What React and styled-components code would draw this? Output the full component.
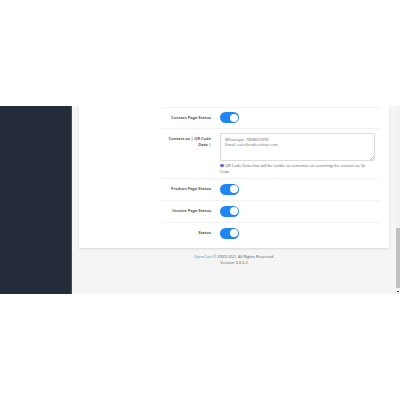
import React from 'react'
import styled, { createGlobalStyle } from 'styled-components'

const Global = createGlobalStyle`
  html, body { margin: 0; padding: 0; background: #fff; }
  body { font-family: "Open Sans", "Noto Sans", sans-serif; }
`

const Shell = styled.div`
  display: flex;
  width: 400px;
  height: 188px;
  margin-top: 106px;
  overflow: hidden;
`

const Sidebar = styled.div`
  width: 72px;
  flex: none;
  background: #242d39;
  border-right: 1px solid #444c57;
  box-sizing: border-box;
`

const Content = styled.div`
  flex: 1;
  background: #f5f5f5;
  padding: 0 7px;
  min-width: 0;
`

const Card = styled.div`
  background: #fff;
  height: 142px;
  padding: 1px 9px 0 82px;
  box-sizing: border-box;
  box-shadow: 0 1px 2px rgba(0, 0, 0, 0.12);
`

const Row = styled.div`
  display: grid;
  grid-template-columns: 50px 1fr;
  column-gap: 9px;
  align-items: ${p => (p.$top ? 'start' : 'center')};
  height: ${p => p.$h}px;
  border-top: 1px solid #f3f3f3;
  box-sizing: border-box;
  padding: ${p => (p.$top ? '4px 0 0' : '0 0 1px')};
`

const Label = styled.div`
  font-size: 4px;
  line-height: 5.5px;
  font-weight: 700;
  color: #5c5c5c;
  text-align: right;
  margin-top: ${p => (p.$wrap ? 3 : 0)}px;
  white-space: ${p => (p.$wrap ? 'normal' : 'nowrap')};
`

const Toggle = styled.div`
  width: 19px;
  height: 11px;
  border-radius: 6px;
  background: #1f87f5;
  display: flex;
  justify-content: flex-end;
  align-items: center;
  padding-right: 1.5px;
  box-sizing: border-box;
`

const Knob = styled.div`
  width: 8px;
  height: 8px;
  border-radius: 50%;
  background: #fff;
`

const Field = styled.div`
  min-width: 0;
`

const TextBox = styled.div`
  position: relative;
  width: 155px;
  height: 28px;
  border: 1px solid #dcdcdc;
  border-radius: 1px;
  box-sizing: border-box;
  padding: 2.5px 4px;
  font-size: 4px;
  line-height: 5.5px;
  color: #666;
`

const Grip = styled.svg`
  position: absolute;
  right: 0;
  bottom: 0;
  width: 4px;
  height: 4px;
`

const Help = styled.div`
  width: 150px;
  margin-top: 2px;
  font-size: 4px;
  line-height: 5.5px;
  color: #5a5a5a;
`

const Dot = styled.span`
  display: inline-block;
  width: 3.5px;
  height: 3.5px;
  border-radius: 50%;
  background: #5a62e0;
  margin-right: 1.5px;
`

const Footer = styled.div`
  margin-top: 6px;
  text-align: center;
  font-size: 4px;
  line-height: 5.5px;
  color: #555;
`

const Brand = styled.span`
  color: #2f95d8;
`

const Scrollbar = styled.div`
  position: relative;
  width: 4px;
  flex: none;
  background: #f1f1f1;
`

const Thumb = styled.div`
  position: absolute;
  left: 0;
  right: 0;
  top: 122px;
  height: 60px;
  background: #c1c1c1;
`

const Arrow = styled.div`
  position: absolute;
  left: 1px;
  bottom: 2px;
  width: 2px;
  height: 1px;
  background: #555;
`

const ToggleRow = ({ label, h }) => (
  <Row $h={h}>
    <Label>{label}</Label>
    <Toggle>
      <Knob />
    </Toggle>
  </Row>
)

export default function App() {
  return (
    <>
      <Global />
      <Shell>
        <Sidebar />
        <Content>
          <Card>
            <ToggleRow label="Contact Page Status" h={21} />
            <Row $h={50} $top>
              <Label $wrap>Contact us | QR Code Data |</Label>
              <Field>
                <TextBox>
                  Whatsapp: 7838655995
                  <br />
                  Email: sale@codeeshop.com
                  <Grip viewBox="0 0 4 4">
                    <path d="M4 0L0 4M4 2L2 4" stroke="#888" strokeWidth="0.5" />
                  </Grip>
                </TextBox>
                <Help>
                  <Dot />
                  QR Code Data that will be visible to customer on scanning the contact us Qr Code
                </Help>
              </Field>
            </Row>
            <ToggleRow label="Product Page Status" h={22} />
            <ToggleRow label="Invoice Page Status" h={22} />
            <ToggleRow label="Status" h={22} />
          </Card>
          <Footer>
            <Brand>OpenCart</Brand> © 2009-2021 All Rights Reserved.
            <br />
            Version 3.0.3.2
          </Footer>
        </Content>
        <Scrollbar>
          <Thumb />
          <Arrow />
        </Scrollbar>
      </Shell>
    </>
  )
}
